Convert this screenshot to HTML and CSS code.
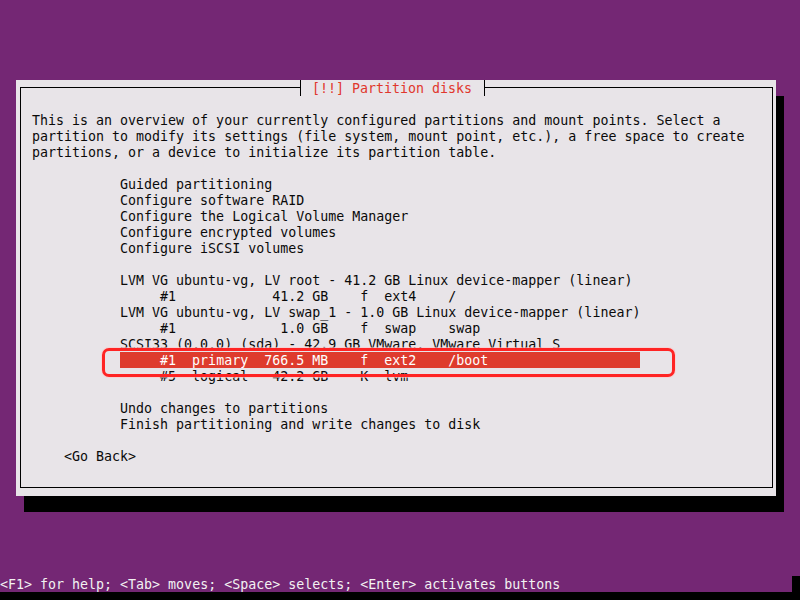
FILE: index.html
```html
<!DOCTYPE html>
<html>
<head>
<meta charset="utf-8">
<link rel="stylesheet" href="styles.css">
</head>
<body>
<div class="screen">
  <div class="dialog">
    <div class="frame">
      <div class="title">[!!] Partition disks</div>
      <div class="text">
<div class="ln">This is an overview of your currently configured partitions and mount points. Select a</div>
<div class="ln">partition to modify its settings (file system, mount point, etc.), a free space to create</div>
<div class="ln">partitions, or a device to initialize its partition table.</div>
<div class="ln"> </div>
<div class="ln">           Guided partitioning</div>
<div class="ln">           Configure software RAID</div>
<div class="ln">           Configure the Logical Volume Manager</div>
<div class="ln">           Configure encrypted volumes</div>
<div class="ln">           Configure iSCSI volumes</div>
<div class="ln"> </div>
<div class="ln">           LVM VG ubuntu-vg, LV root - 41.2 GB Linux device-mapper (linear)</div>
<div class="ln">                #1            41.2 GB    f  ext4    /</div>
<div class="ln">           LVM VG ubuntu-vg, LV swap_1 - 1.0 GB Linux device-mapper (linear)</div>
<div class="ln">                #1             1.0 GB    f  swap    swap</div>
<div class="ln">           SCSI33 (0,0,0) (sda) - 42.9 GB VMware, VMware Virtual S</div>
<div class="ln">           <span class="sel">     #1  primary  766.5 MB    f  ext2    /boot                   </span></div>
<div class="ln">                #5  logical   42.2 GB    K  lvm</div>
<div class="ln"> </div>
<div class="ln">           Undo changes to partitions</div>
<div class="ln">           Finish partitioning and write changes to disk</div>
<div class="ln"> </div>
<div class="ln">    &lt;Go Back&gt;</div>
      </div>
    </div>
  </div>
  <div class="spacer"></div>
  <div class="footer">
    <div class="help">&lt;F1&gt; for help; &lt;Tab&gt; moves; &lt;Space&gt; selects; &lt;Enter&gt; activates buttons</div>
    <div class="corner"></div>
  </div>
  <div class="bottom"></div>
</div>
<div class="mark"></div>
</body>
</html>
```
FILE: styles.css
```css
html, body {
  margin: 0;
  padding: 0;
}
body {
  width: 800px;
  height: 600px;
  overflow: hidden;
  background: #742774;
  font-family: "DejaVu Sans Mono", "Liberation Mono", monospace;
  font-size: 13.3px;
  line-height: 18px;
}
.screen {
  display: flex;
  flex-direction: column;
  height: 600px;
  padding-top: 80px;
  box-sizing: border-box;
}
.dialog {
  position: relative;
  margin-left: 16px;
  width: 760px;
  height: 416px;
  background: #e8e4e8;
  box-shadow: 8px 16px 0 #000;
  padding: 7px 3px 8px 4px;
  box-sizing: border-box;
}
.frame {
  position: relative;
  height: 100%;
  border: 1px solid #000;
  box-sizing: border-box;
  padding: 24px 0 0 11px;
}
.title {
  position: absolute;
  left: 279px;
  top: -8px;
  width: 185px;
  height: 16px;
  box-sizing: border-box;
  border-left: 1px solid #000;
  border-right: 1px solid #000;
  padding-left: 11px;
  background: #e8e4e8;
  color: #e0372c;
  white-space: pre;
}
.text {
  color: #0a0a0a;
}
.ln {
  white-space: pre;
  height: 16px;
}
.sel {
  display: inline-block;
  vertical-align: top;
  height: 16px;
  background: #de3b2d;
  color: #ffffff;
}
.spacer {
  flex: 1;
}
.footer {
  display: flex;
  height: 16px;
}
.help {
  flex: 1;
  height: 16px;
  color: #f2f2f2;
  white-space: pre;
}
.corner {
  width: 8px;
  background: #000;
}
.bottom {
  height: 8px;
  background: #000;
}
.mark {
  position: absolute;
  left: 102px;
  top: 348px;
  width: 573px;
  height: 29px;
  box-sizing: border-box;
  border: 3px solid #ff2424;
  border-radius: 7px;
  box-shadow: 0 0 0 1px rgba(255, 200, 200, 0.6);
}
```
